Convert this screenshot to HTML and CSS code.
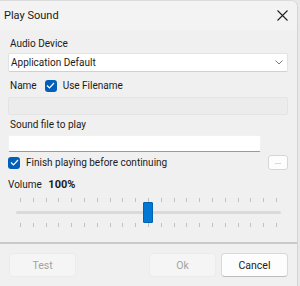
FILE: index.html
```html
<!DOCTYPE html>
<html lang="en">
<head>
  <meta charset="UTF-8" />
  <title>Play Sound</title>
  <link rel="stylesheet" href="styles.css">
</head>
<body>
  <div class="window">
    <div class="titlebar">
      <span class="title">Play Sound</span>
      <svg class="close" width="11" height="11" viewBox="0 0 11 11">
        <path d="M0.5 0.5 L10.5 10.5 M10.5 0.5 L0.5 10.5" stroke="#1f1f1f" stroke-width="1.1" fill="none"/>
      </svg>
    </div>

    <div class="content">
      <div class="label">Audio Device</div>
      <div class="select">
        <span>Application Default</span>
        <svg width="8" height="5" viewBox="0 0 8 5">
          <path d="M0.5 0.5 L4 4 L7.5 0.5" stroke="#7a7a7a" stroke-width="1" fill="none"/>
        </svg>
      </div>

      <div class="name-row">
        <span>Name</span>
        <span class="check"><svg width="9" height="7" viewBox="0 0 9 7"><path d="M1 3.5 L3.5 6 L8 1" stroke="#fff" stroke-width="1.2" fill="none"/></svg></span>
        <span>Use Filename</span>
      </div>
      <div class="textbox disabled"></div>

      <div class="label sound">Sound file to play</div>
      <div class="textbox file"></div>

      <div class="finish-row">
        <span class="check"><svg width="9" height="7" viewBox="0 0 9 7"><path d="M1 3.5 L3.5 6 L8 1" stroke="#fff" stroke-width="1.2" fill="none"/></svg></span>
        <span class="finish-text">Finish playing before continuing</span>
        <button class="browse">...</button>
      </div>

      <div class="volume-row">
        <span>Volume</span>
        <b>100%</b>
      </div>

      <div class="slider">
        <div class="ticks"></div>
        <div class="track"></div>
        <div class="ticks"></div>
        <div class="thumb"></div>
      </div>
    </div>

    <div class="footer">
      <button class="btn" disabled>Test</button>
      <div class="right-buttons">
        <button class="btn" disabled>Ok</button>
        <button class="btn primary">Cancel</button>
      </div>
    </div>
  </div>
  <script>
    document.querySelectorAll('.ticks').forEach(function (row) {
      for (var i = 0; i < 21; i++) {
        row.appendChild(document.createElement('i'));
      }
    });
  </script>
</body>
</html>
```

FILE: styles.css
```css
html, body {
  margin: 0;
  padding: 0;
  background: #e8e8e8;
}
body {
  font-family: Roboto, "Liberation Sans", sans-serif;
  font-size: 10px;
  color: #1b1b1b;
}
.window {
  width: 298px;
  height: 286px;
  background: #f0f0f0;
  border-right: 1px solid #d4d4d4;
  border-top: 1px solid #dcdcdc;
  border-top-right-radius: 7px;
  box-sizing: border-box;
  overflow: hidden;
}
.titlebar {
  height: 29px;
  background: #f3f3f3;
  display: flex;
  align-items: center;
  justify-content: space-between;
  padding: 0 9px 0 4px;
}
.title {
  font-size: 11px;
  color: #1a1a1a;
}
.content {
  padding: 7px 9px 0 8px;
}
.label {
  height: 14px;
  line-height: 14px;
  padding-left: 2px;
  margin-bottom: 2px;
}
.select {
  height: 19px;
  box-sizing: border-box;
  background: #fff;
  border: 1px solid #e3e3e3;
  border-bottom-color: #d0d0d0;
  border-radius: 2px;
  display: flex;
  align-items: center;
  justify-content: space-between;
  padding: 0 4px 0 2px;
}
.name-row {
  margin-top: 7px;
  height: 13px;
  display: flex;
  align-items: center;
  padding-left: 2px;
}
.name-row .check {
  margin: 0 6px 0 8px;
}
.check {
  width: 12px;
  height: 12px;
  border-radius: 3px;
  background: #005fb8;
  display: flex;
  align-items: center;
  justify-content: center;
  flex-shrink: 0;
}
.textbox {
  box-sizing: border-box;
  border-radius: 2px;
}
.textbox.disabled {
  margin-top: 5px;
  height: 18px;
  background: #ececec;
  border: 1px solid #e4e4e4;
}
.label.sound {
  margin-top: 3px;
  margin-bottom: 3px;
}
.textbox.file {
  height: 17px;
  width: 253px;
  background: #fff;
  border: 1px solid #f2f2f2;
  border-bottom: 1px solid #9a9a9a;
}
.finish-row {
  margin-top: 3px;
  height: 15px;
  display: flex;
  align-items: center;
}
.finish-text {
  margin-left: 6px;
  flex: 1;
}
.browse {
  width: 20px;
  height: 15px;
  padding: 0 0 3px;
  font-family: inherit;
  font-size: 8px;
  color: #8a8a8a;
  background: #fdfdfd;
  border: 1px solid #d6d6d6;
  border-radius: 3px;
}
.volume-row {
  margin-top: 8px;
  height: 14px;
  line-height: 14px;
}
.volume-row b {
  margin-left: 4px;
  font-size: 11px;
}
.slider {
  position: relative;
  margin: 6px 7px 0 8px;
  height: 30px;
}
.ticks {
  display: flex;
  justify-content: space-between;
  padding: 0 4px;
  height: 4px;
}
.ticks i {
  width: 1px;
  height: 4px;
  background: #c2c2c2;
}
.track {
  margin: 9px 0 9px;
  height: 3px;
  background: #dadada;
  border-radius: 2px;
}
.thumb {
  position: absolute;
  left: 127px;
  top: 4px;
  width: 10px;
  height: 21px;
  background: #0078d4;
  border: 1px solid #0063b1;
  box-sizing: border-box;
  border-radius: 1px;
}
.footer {
  margin-top: 14px;
  border-top: 2px solid #c9c9c9;
  padding: 9px 9px 0 9px;
  display: flex;
  justify-content: space-between;
}
.right-buttons {
  display: flex;
  gap: 5px;
}
.btn {
  width: 67px;
  height: 24px;
  font-family: inherit;
  font-size: 10.5px;
  color: #a3a3a3;
  background: #f5f5f5;
  border: 1px solid #ebebeb;
  border-radius: 4px;
}
.btn.primary {
  color: #1b1b1b;
  background: #fdfdfd;
  border: 1px solid #d9d9d9;
  border-bottom-color: #bdbdbd;
}
```
